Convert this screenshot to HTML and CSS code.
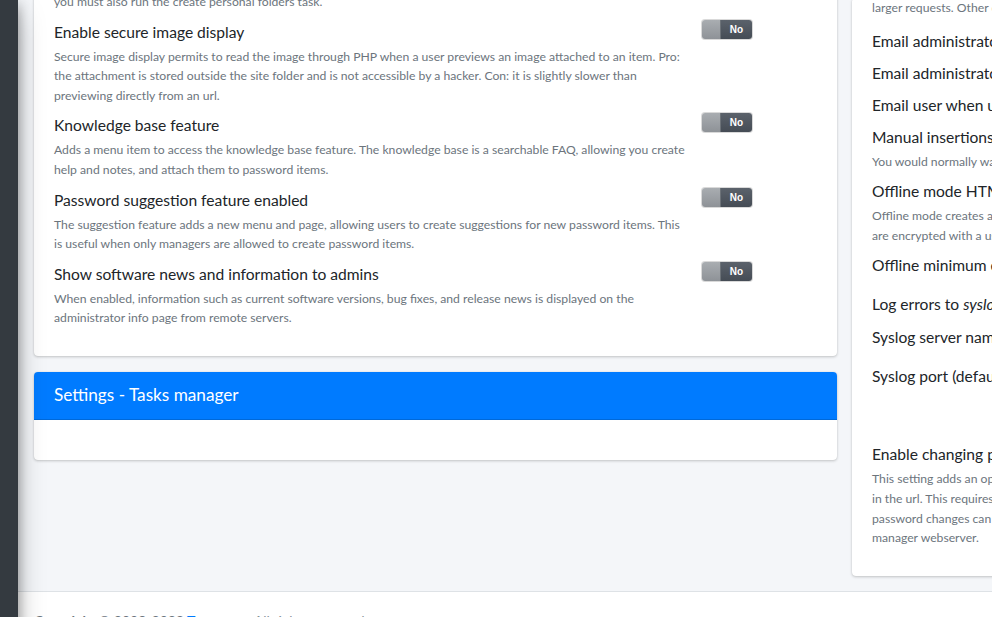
FILE: index.html
```html
<!DOCTYPE html>
<html lang="en">
<head>
<meta charset="utf-8">
<title>Settings</title>
<link rel="stylesheet" href="styles.css">
</head>
<body>
<div class="wrapper">
  <aside class="sidebar"></aside>
  <div class="main">
    <div class="content">
      <div class="col-left">
        <div class="card">
          <div class="card-body">
            <div class="setting">
              <div class="setting-text">
                <p class="desc first">you must also run the create personal folders task.</p>
              </div>
            </div>
            <div class="setting">
              <div class="setting-text">
                <div class="title">Enable secure image display</div>
                <p class="desc">Secure image display permits to read the image through PHP when a user previews an image attached to an item. Pro: the attachment is stored outside the site folder and is not accessible by a hacker. Con: it is slightly slower than previewing directly from an url.</p>
              </div>
              <div class="toggle"><span class="handle"></span><span class="label">No</span></div>
            </div>
            <div class="setting">
              <div class="setting-text">
                <div class="title">Knowledge base feature</div>
                <p class="desc">Adds a menu item to access the knowledge base feature. The knowledge base is a searchable FAQ, allowing you create help and notes, and attach them to password items.</p>
              </div>
              <div class="toggle"><span class="handle"></span><span class="label">No</span></div>
            </div>
            <div class="setting">
              <div class="setting-text">
                <div class="title">Password suggestion feature enabled</div>
                <p class="desc">The suggestion feature adds a new menu and page, allowing users to create suggestions for new password items. This is useful when only managers are allowed to create password items.</p>
              </div>
              <div class="toggle"><span class="handle"></span><span class="label">No</span></div>
            </div>
            <div class="setting">
              <div class="setting-text">
                <div class="title">Show software news and information to admins</div>
                <p class="desc">When enabled, information such as current software versions, bug fixes, and release news is displayed on the administrator info page from remote servers.</p>
              </div>
              <div class="toggle"><span class="handle"></span><span class="label">No</span></div>
            </div>
          </div>
        </div>
        <div class="card">
          <div class="card-header">Settings - Tasks manager</div>
          <div class="card-body empty"></div>
        </div>
      </div>
      <div class="col-right">
        <div class="card">
          <div class="card-body right">
            <div class="r-item first"><p class="desc first">larger requests. Other clients may need it.</p></div>
            <div class="r-item"><div class="title">Email administrators on login</div></div>
            <div class="r-item"><div class="title">Email administrators on password change</div></div>
            <div class="r-item"><div class="title">Email user when updating password</div></div>
            <div class="r-item"><div class="title">Manual insertions by administrators allowed</div><p class="desc">You would normally want this disabled.</p></div>
            <div class="r-item"><div class="title">Offline mode HTML export</div><p class="desc">Offline mode creates an HTML export of all items and passwords that<br>are encrypted with a user key.</p></div>
            <div class="r-item tall"><div class="title">Offline minimum entropy</div></div>
            <div class="r-item mid"><div class="title">Log errors to <em>syslog</em></div></div>
            <div class="r-item mid2"><div class="title">Syslog server name</div></div>
            <div class="r-item big"><div class="title">Syslog port (default: 514)</div></div>
            <div class="r-item last"><div class="title">Enable changing passwords on servers</div><p class="desc">This setting adds an option to change server passwords directly<br>in the url. This requires an agent so that<br>password changes can be sent by the Teampass<br>manager webserver.</p></div>
          </div>
        </div>
      </div>
    </div>
    <footer class="footer"><strong>Copyright &copy; 2009-2023 <a href="#">Teampass</a>.</strong> All rights reserved.</footer>
  </div>
</div>
</body>
</html>
```

FILE: styles.css
```css
html, body {
  margin: 0;
  padding: 0;
  height: 100%;
  overflow: hidden;
}
body {
  font-family: Lato, "Liberation Sans", sans-serif;
  background: #f4f6f9;
  color: #212529;
}
.wrapper {
  display: flex;
  min-height: 100%;
}
.sidebar {
  width: 18px;
  flex: 0 0 18px;
  background: #343a40;
  box-shadow: 0 14px 28px rgba(0,0,0,.25), 0 10px 10px rgba(0,0,0,.22), 4px 0 12px rgba(0,0,0,.12);
  position: relative;
  z-index: 2;
}
.main {
  flex: 1;
  display: flex;
  flex-direction: column;
  min-width: 0;
}
.content {
  display: flex;
  gap: 15px;
  padding: 0 0 0 16px;
  margin-top: -8px;
  align-items: flex-start;
}
.col-left {
  width: 803px;
  flex: 0 0 803px;
  display: flex;
  flex-direction: column;
  gap: 16px;
}
.col-right {
  width: 420px;
  flex: 0 0 420px;
  margin-top: 6px;
}
.card {
  background: #fff;
  border-radius: 4px;
  box-shadow: 0 0 1px rgba(0,0,0,.125), 0 1px 3px rgba(0,0,0,.2);
  overflow: hidden;
}
.card-body {
  padding: 0 20px 20px;
}
.card-body.right {
  padding-bottom: 28px;
}
.card-body.empty {
  height: 40px;
  padding: 0;
}
.card-header {
  background: #007bff;
  color: #fff;
  font-size: 17.2px;
  line-height: 24px;
  padding: 11px 20px 12px;
  border-bottom: 1px solid #0069d9;
}
.setting {
  display: flex;
  align-items: flex-start;
  margin-bottom: 8px;
}
.setting-text {
  width: 632px;
  flex: 0 0 632px;
}
.title {
  font-size: 15.6px;
  line-height: 24px;
  color: #212529;
}
.desc {
  margin: 3px 0 0;
  font-size: 12.2px;
  line-height: 19.6px;
  color: #6c757d;
}
.desc.first {
  margin-top: 0;
}
.toggle {
  margin-left: 16px;
  width: 50px;
  height: 19px;
  display: flex;
  border-radius: 3px;
  overflow: hidden;
  box-shadow: 0 0 0 1px rgba(0,0,0,.15);
}
.toggle .handle {
  width: 18px;
  background: linear-gradient(#a9adb1, #8e9297);
  border-right: 1px solid #6c7278;
}
.toggle .label {
  flex: 1;
  background: linear-gradient(#5b626b, #454c55);
  color: #fff;
  font-family: "Liberation Sans", Arial, sans-serif;
  font-weight: bold;
  font-size: 10px;
  line-height: 19px;
  text-align: center;
}
.r-item {
  margin-bottom: 8px;
}
.r-item.first {
  margin-bottom: 11px;
}
.r-item .title {
  white-space: nowrap;
}
.r-item .desc {
  white-space: nowrap;
}
.r-item.tall {
  margin-bottom: 15px;
}
.r-item.mid {
  margin-bottom: 9px;
}
.r-item.mid2 {
  margin-bottom: 15px;
}
.r-item.big {
  margin-bottom: 54px;
}
.r-item.last {
  margin-bottom: 0;
}
.footer {
  margin-top: 15px;
  background: #fff;
  border-top: 1px solid #dee2e6;
  padding: 17px 16px 14px;
  color: #869099;
  font-size: 14px;
  line-height: 24px;
  flex: 1;
}
.footer strong {
  color: #6c757d;
}
.footer a {
  color: #007bff;
  text-decoration: none;
}
```
